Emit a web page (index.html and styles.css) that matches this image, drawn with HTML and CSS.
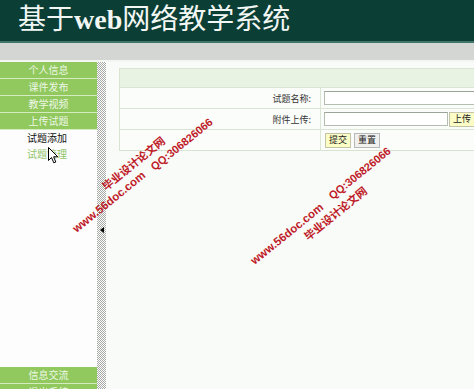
FILE: index.html
```html
<!DOCTYPE html>
<html lang="zh-CN">

<head>
    <meta charset="UTF-8">
    <meta name="viewport" content="width=device-width, initial-scale=1.0">
    <title>基于web网络教学系统</title>
    <link rel="stylesheet" href="styles.css">
</head>

<body>
    <div class="page">
        <header class="top">
            <h1 class="title">基于<b>web</b>网络教学系统</h1>
        </header>
        <div class="band"></div>

        <div class="layout">
            <aside class="side">
                <ul class="menu">
                    <li>个人信息</li>
                    <li>课件发布</li>
                    <li>教学视频</li>
                    <li>上传试题</li>
                </ul>
                <ul class="sub">
                    <li class="active">试题添加</li>
                    <li>试题管理</li>
                </ul>
                <ul class="menu menu-bottom">
                    <li>信息交流</li>
                    <li>退出系统</li>
                </ul>
            </aside>

            <div class="split">
                <span class="arrow"></span>
            </div>

            <main class="main">
                <table class="form">
                    <tr class="head">
                        <td colspan="2"></td>
                    </tr>
                    <tr>
                        <td class="label">试题名称:</td>
                        <td class="field"><input class="text wide" type="text"></td>
                    </tr>
                    <tr>
                        <td class="label">附件上传:</td>
                        <td class="field"><input class="text" type="text"><button class="btn yellow">上传</button></td>
                    </tr>
                    <tr>
                        <td class="label"></td>
                        <td class="field">
                            <button class="btn yellow">提交</button>
                            <button class="btn gray">重置</button>
                        </td>
                    </tr>
                </table>
            </main>
        </div>

        <!-- watermark + mouse cursor sit over the page -->
        <span class="wm cn" style="left:103px;top:181px">毕业设计论文网</span>
        <span class="wm url" style="left:74px;top:224px">www.56doc.com</span>
        <span class="wm qq" style="left:152px;top:162px">QQ:306826066</span>

        <span class="wm url" style="left:252px;top:256px">www.56doc.com</span>
        <span class="wm qq" style="left:330px;top:191px">QQ:306826066</span>
        <span class="wm cn" style="left:305px;top:231px">毕业设计论文网</span>

        <svg class="cursor" width="11" height="17" viewBox="0 0 11 17">
            <path d="M0.5 0.5 L0.5 13.5 L3.5 10.5 L5.8 15.8 L7.8 15 L5.6 9.8 L9.8 9.8 Z" fill="#fff" stroke="#000" stroke-width="1" />
        </svg>
    </div>
</body>

</html>
```

FILE: styles.css
```css
* {
    box-sizing: border-box;
}

body {
    margin: 0;
    height: 100vh;
    overflow: hidden;
    font-family: "Noto Sans CJK SC", "Liberation Sans", sans-serif;
    background-color: #ffffff;
}

.page {
    position: relative;
    height: 389px;
    display: flex;
    flex-direction: column;
    overflow: hidden;
}

.top {
    height: 43px;
    background-color: #0b3e35;
    border-bottom: 2px solid #3f7668;
    display: flex;
    align-items: center;
    padding-left: 18px;
}

.title {
    margin: 0;
    color: #f2f7f4;
    font-family: "Liberation Serif", "Noto Sans CJK SC", serif;
    font-size: 28px;
    font-weight: normal;
    line-height: 1;
    padding-bottom: 2px;
}

.title b {
    font-weight: bold;
}

.band {
    height: 19px;
    background-color: #d3d6d2;
    border-bottom: 2px solid #f3f6f2;
}

.layout {
    flex: 1;
    display: flex;
    min-height: 0;
}

/* left menu */
.side {
    width: 97px;
    display: flex;
    flex-direction: column;
    background-color: #fcfdfc;
}

.side ul {
    list-style: none;
    margin: 0;
    padding: 0;
}

.menu li {
    height: 17px;
    line-height: 16px;
    background-color: #91c95e;
    border-bottom: 1px solid #d4ecbf;
    color: #eef7e6;
    font-size: 10px;
    text-align: center;
}

.sub {
    padding: 0 0 0 27px !important;
}

.sub li {
    height: 16px;
    line-height: 16px;
    font-size: 10px;
    color: #93c56c;
}

.sub li.active {
    color: #111;
}

.menu-bottom {
    margin-top: 205px !important;
}

/* dotted splitter */
.split {
    width: 9px;
    display: flex;
    align-items: center;
    justify-content: center;
    padding-top: 8px;
    background: repeating-conic-gradient(#a5a8a5 0 25%, #ffffff 0 50%) 0 0 / 2px 2px;
}

.arrow {
    width: 0;
    height: 0;
    border-top: 3px solid transparent;
    border-bottom: 3px solid transparent;
    border-right: 4px solid #000;
}

/* content */
.main {
    flex: 1;
    background-color: #f8fbf7;
    padding: 6px 0 0 13px;
    overflow: hidden;
}

.form {
    width: 420px;
    border-collapse: collapse;
    font-size: 9px;
    color: #333;
    background-color: #fbfdfa;
    border: 1px solid #d8e3d2;
}

.form td {
    border-top: 1px solid #dbe5d6;
    height: 21px;
    padding: 0;
}

.form .head td {
    height: 19px;
    background-color: #e9f3e4;
}

.label {
    width: 201px;
    text-align: right;
    padding-right: 9px !important;
    border-right: 1px solid #dbe5d6;
}

.field {
    padding-left: 3px !important;
    white-space: nowrap;
}

.text {
    display: inline-block;
    vertical-align: middle;
    width: 124px;
    height: 14px;
    margin: 0;
    border: 1px solid #b3bdb1;
    border-top-color: #9aa598;
    background-color: #fff;
}

.text.wide {
    width: 200px;
}

.btn {
    display: inline-block;
    vertical-align: middle;
    height: 15px;
    margin: 0 0 0 1px;
    padding: 0 3px;
    font-family: "Noto Sans CJK SC", sans-serif;
    font-size: 9px;
    line-height: 12px;
    color: #222;
    border: 1px solid #c3c4a6;
}

.btn.yellow {
    background-color: #fcfcc6;
}

.btn.gray {
    background-color: #f0f0ee;
    border-color: #b8b8b8;
    margin-left: 1px;
}

/* watermark */
.wm {
    position: absolute;
    line-height: 12px;
    white-space: nowrap;
    color: #bf1a28;
    font-weight: bold;
    transform-origin: 0 50%;
    transform: rotate(-39deg);
}

.url {
    font-family: "Liberation Sans", sans-serif;
    font-size: 11.5px;
}

.qq {
    font-family: "Liberation Sans", sans-serif;
    font-size: 11px;
}

.cn {
    font-size: 11px;
}

.cursor {
    position: absolute;
    left: 48px;
    top: 147px;
}
```
